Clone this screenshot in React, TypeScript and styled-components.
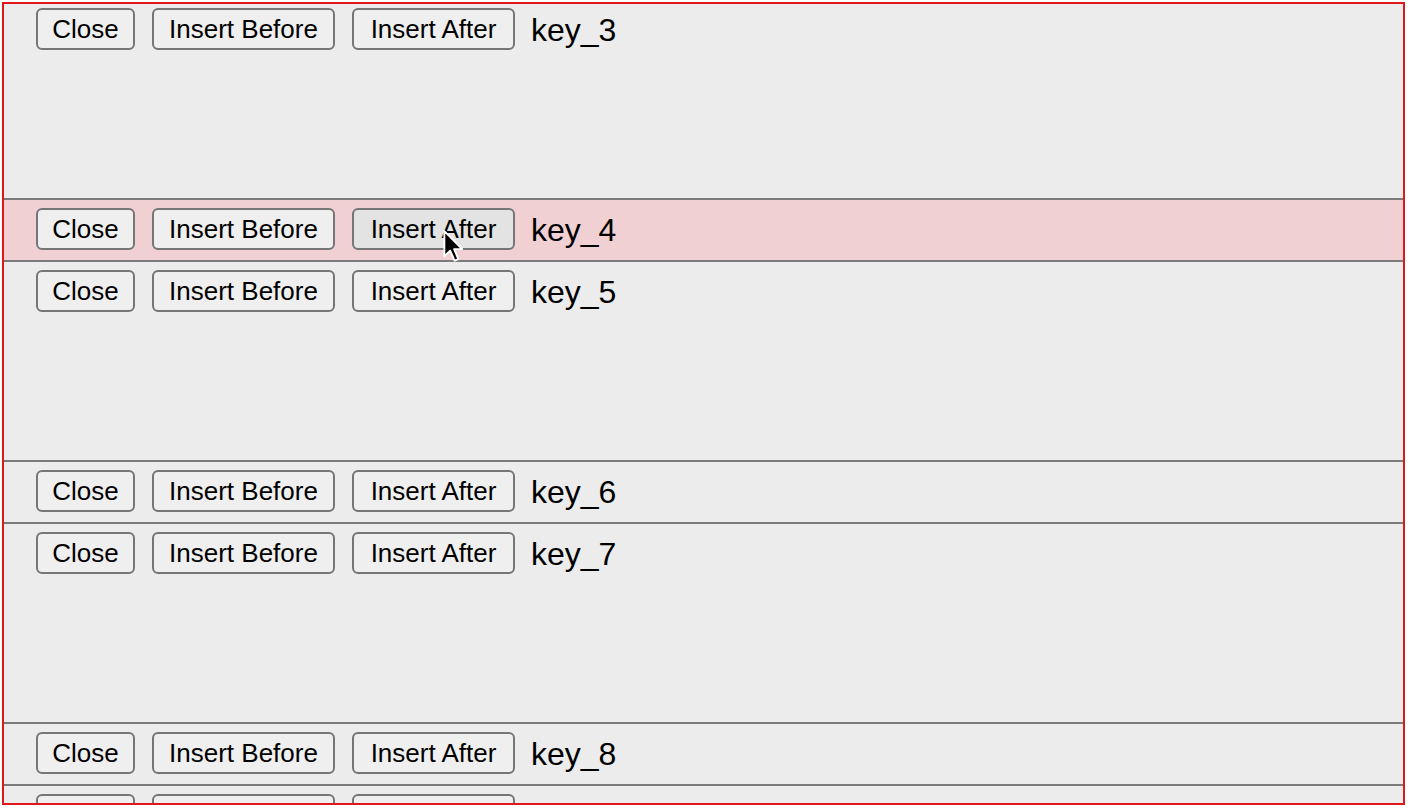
import React from "react"
import styled, { createGlobalStyle } from "styled-components"

const GlobalStyle = createGlobalStyle`
  html, body {
    margin: 0;
    padding: 0;
    background: #ffffff;
  }
  body {
    font-family: "Liberation Sans", Arial, Helvetica, sans-serif;
  }
`

const ScrollBox = styled.div`
  position: relative;
  box-sizing: border-box;
  margin: 2px 3px 0 2px;
  height: 803px;
  border: 2px solid #e0161b;
  background: #ececec;
  overflow: hidden;
`

// scrolled a few pixels into key_3
const List = styled.div`
  margin-top: -4px;
`

const Row = styled.div<{ $tall?: boolean; $hover?: boolean }>`
  box-sizing: content-box;
  display: flex;
  align-items: flex-start;
  gap: 17px;
  height: ${p => (p.$tall ? 190 : 52)}px;
  padding: 8px 0 0 32px;
  border-bottom: 2px solid #7a7a7a;
  background: ${p => (p.$hover ? "#f0d0d3" : "#ececec")};
`

const Button = styled.button<{ $w: number; $hover?: boolean }>`
  box-sizing: border-box;
  width: ${p => p.$w}px;
  height: 42px;
  padding: 0;
  margin: 0;
  border: 2px solid #767676;
  border-radius: 6px;
  background: ${p => (p.$hover ? "#e3e3e3" : "#efefef")};
  color: #000;
  font-family: "Liberation Sans", Arial, Helvetica, sans-serif;
  font-size: 26px;
  cursor: default;
`

const KeyLabel = styled.span`
  margin: 4px 0 0 -1px;
  font-size: 32px;
  line-height: 37px;
  color: #000;
`

const Cursor = styled.svg`
  position: absolute;
  left: 438px;
  top: 225px;
  width: 22px;
  height: 34px;
  pointer-events: none;
`

const keys = [3, 4, 5, 6, 7, 8, 9]
const hovered = 4

export default function App() {
  return (
    <>
      <GlobalStyle />
      <ScrollBox>
        <List>
          {keys.map(k => (
            <Row key={k} $tall={k % 2 === 1} $hover={k === hovered}>
              <Button $w={99}>Close</Button>
              <Button $w={183}>Insert Before</Button>
              <Button $w={163} $hover={k === hovered}>
                Insert After
              </Button>
              <KeyLabel>key_{k}</KeyLabel>
            </Row>
          ))}
        </List>
        <Cursor viewBox="0 0 14 21">
          <path
            d="M1.5 1 L1.5 17 L5.2 13.4 L8 19.8 L10.4 18.8 L7.7 12.5 L12.8 12.5 Z"
            fill="#000"
            stroke="#fff"
            strokeWidth="1.2"
            strokeLinejoin="round"
          />
        </Cursor>
      </ScrollBox>
    </>
  )
}
